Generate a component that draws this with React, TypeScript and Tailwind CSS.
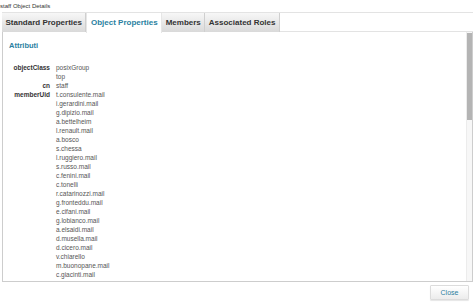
const members = [
  't.consulente.mail',
  'i.gerardini.mail',
  'g.dipizio.mail',
  'a.bettelheim',
  'l.renault.mail',
  'a.bosco',
  's.chessa',
  'l.ruggiero.mail',
  's.russo.mail',
  'c.fenini.mail',
  'c.tonelli',
  'r.catarinozzi.mail',
  'g.fronteddu.mail',
  'e.cifani.mail',
  'g.lobianco.mail',
  'a.elsaidi.mail',
  'd.musella.mail',
  'd.cicero.mail',
  'v.chiarello',
  'm.buonopane.mail',
  'c.giacinti.mail',
];

const attributes: { name: string; values: string[] }[] = [
  { name: 'objectClass', values: ['posixGroup', 'top'] },
  { name: 'cn', values: ['staff'] },
  { name: 'memberUid', values: members },
];

const tabs = ['Standard Properties', 'Object Properties', 'Members', 'Associated Roles'];

export default function App() {
  const active = 'Object Properties';

  return (
    <div
      className="relative h-[302px] w-[474px] overflow-hidden bg-white"
      style={{ fontFamily: '"Liberation Sans", Arial, sans-serif' }}
    >
      <div className="h-[12px] pt-[2px] text-[6px] leading-[8px] text-[#333]">staff Object Details</div>

      <div className="ml-[2px] w-[471px]">
        {/* tab strip */}
        <div className="flex h-[20px] border-t border-[#e3e3e3]">
          {tabs.map((t) =>
            t === active ? (
              <div
                key={t}
                className="flex h-[20px] items-center border-x border-[#e6e6e6] bg-white px-[3.5px] text-[8px] font-bold text-[#2a7f9f]"
              >
                {t}
              </div>
            ) : (
              <div
                key={t}
                className="flex h-[19px] items-center border-r border-[#cfcfcf] bg-gradient-to-b from-[#f7f7f7] to-[#d9d9d9] px-[3.5px] text-[8px] font-bold text-[#333]"
              >
                {t}
              </div>
            )
          )}
          <div className="flex-1 border-b border-[#e3e3e3]" />
        </div>

        {/* content box */}
        <div className="flex h-[250px] border-x border-b border-[#cdcdcd]">
          <div className="flex-1 overflow-hidden pl-[6px] pt-[9px]">
            <div className="text-[7.5px] font-bold leading-[10px] text-[#2a7f9f]">Attributi</div>
            <div className="mt-[12px] grid grid-cols-[41px_1fr] gap-x-[6px] text-[6.5px] leading-[9px]">
              {attributes.map((a) => (
                <div key={a.name} className="contents">
                  <div className="text-right font-bold text-[#333]">{a.name}</div>
                  <div className="text-[#555]">
                    {a.values.map((v) => (
                      <div key={v}>{v}</div>
                    ))}
                  </div>
                </div>
              ))}
            </div>
          </div>
          {/* scrollbar */}
          <div className="w-[6px] border-l border-[#ececec] bg-[#f7f7f7] pt-[1px]">
            <div className="h-[87px] w-[5px] bg-[#b4b4b4]" />
          </div>
        </div>

        <div className="mt-[3px] flex justify-end pr-[4px]">
          <button className="h-[15px] w-[39px] rounded-[1px] border border-[#dcdcdc] bg-gradient-to-b from-white to-[#ececec] text-[7px] leading-[13px] text-[#2a7f9f] shadow-[0_1px_1px_rgba(0,0,0,0.1)]">
            Close
          </button>
        </div>
      </div>
    </div>
  );
}
